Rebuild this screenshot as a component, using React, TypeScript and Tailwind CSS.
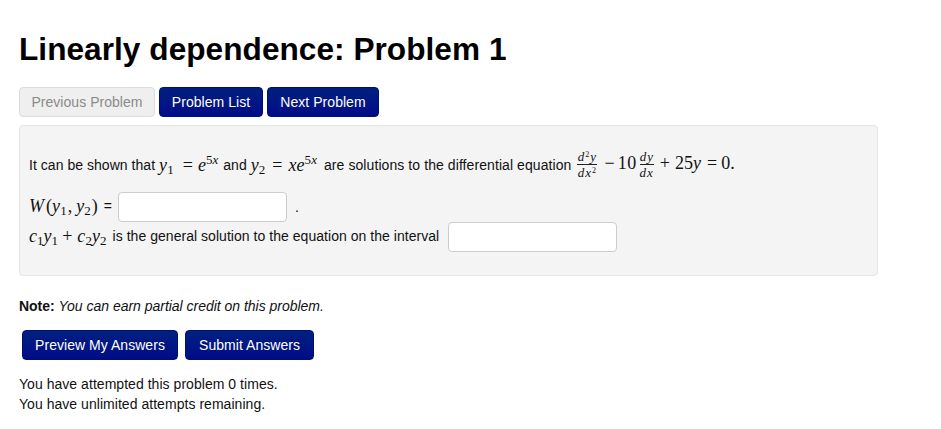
import type { ReactNode } from "react";

const btn =
  "h-[30px] flex items-center justify-center rounded-[4px] border border-[#00106e] bg-gradient-to-b from-[#001f80] to-[#000a88] text-[14px] text-white [text-shadow:0_-1px_0_rgba(0,0,0,0.25)]";

function M({ children, className = "" }: { children: ReactNode; className?: string }) {
  return (
    <span className={`flex items-baseline font-['Liberation_Serif',serif] text-[18px] text-[#111] whitespace-nowrap ${className}`}>
      {children}
    </span>
  );
}

function I({ children, className = "" }: { children: ReactNode; className?: string }) {
  return <i className={className}>{children}</i>;
}

function Sub({ children }: { children: ReactNode }) {
  return <span className="relative top-[3px] text-[13px] leading-none">{children}</span>;
}

function Sup({ children, tiny = false }: { children: ReactNode; tiny?: boolean }) {
  return tiny ? (
    <span className="relative top-[-4px] text-[8px] leading-none not-italic">{children}</span>
  ) : (
    <span className="relative top-[-7px] text-[13px] leading-none">{children}</span>
  );
}

function Frac({ top, bottom, width }: { top: ReactNode; bottom: ReactNode; width: string }) {
  return (
    <span className={`inline-flex flex-col items-center self-center italic text-[13px] leading-[14px] tracking-[1px] ${width}`}>
      <span className="border-b border-[#222] w-full text-center">{top}</span>
      <span className="pt-[1px]">{bottom}</span>
    </span>
  );
}

export default function App() {
  return (
    <div className="w-[941px] h-[429px] bg-white px-[19px] pt-[29px] font-['Liberation_Sans',Arial,sans-serif] text-[14px] tracking-[0.04px] text-[#111] overflow-hidden">
      <h1 className="text-[31.6px] leading-[40px] font-bold text-black">Linearly dependence: Problem 1</h1>

      <div className="flex gap-[4px] mt-[18px]">
        <div className="h-[30px] w-[136px] flex items-center justify-center rounded-[4px] border border-[#dcdcdc] bg-[#efefef] text-[#8a8a8a]">
          Previous Problem
        </div>
        <div className={`${btn} w-[104px]`}>Problem List</div>
        <div className={`${btn} w-[112px]`}>Next Problem</div>
      </div>

      <div className="w-[859px] h-[151px] mt-[8px] px-[9px] rounded-[4px] border border-[#e5e5e5] bg-[#f4f4f4]">
        <div className="flex items-center h-[30px] mt-[24px] whitespace-pre">
          <span>It can be shown that</span>
          <M className="ml-[4px]">
            <I>y</I><Sub>1</Sub>
            <span className="ml-[9px]">=</span>
            <I className="ml-[5px]">e</I><Sup>5<I>x</I></Sup>
          </M>
          <span className="ml-[5px]">and</span>
          <M className="ml-[4px]">
            <I>y</I><Sub>2</Sub>
            <span className="ml-[7px]">=</span>
            <I className="ml-[6px]">xe</I><Sup>5<I>x</I></Sup>
          </M>
          <span className="ml-[7px] tracking-[0.08px]">are solutions to the differential equation</span>
          <M className="ml-[6px]">
            <Frac width="w-[20px]" top={<>d<Sup tiny>2</Sup>y</>} bottom={<>dx<Sup tiny>2</Sup></>} />
            <span className="ml-[7px]">−</span>
            <span className="ml-[3px] tracking-[0.5px]">10</span>
            <Frac width="w-[14px] ml-[3px]" top="dy" bottom="dx" />
            <span className="ml-[6px]">+</span>
            <span className="ml-[5px]">25<I>y</I></span>
            <span className="ml-[6px]">=</span>
            <span className="ml-[4px]">0.</span>
          </M>
        </div>

        <div className="flex items-center h-[30px] mt-[12px]">
          <M className="mb-[2px]">
            <I>W</I>
            <span className="ml-[2px]">(</span>
            <I>y</I><Sub>1</Sub>
            <span className="ml-[1px]">,</span>
            <I className="ml-[4px]">y</I><Sub>2</Sub>
            <span className="ml-[1px]">)</span>
          </M>
          <span className="ml-[6px] mb-[2px]">=</span>
          <div className="ml-[6px] w-[169px] h-[30px] rounded-[4px] border border-[#cccccc] bg-white" />
          <span className="ml-[8px]">.</span>
        </div>

        <div className="flex items-center h-[30px]">
          <M className="mb-[2px]">
            <I>c</I><Sub>1</Sub><I>y</I><Sub>1</Sub>
            <span className="ml-[4px]">+</span>
            <I className="ml-[5px]">c</I><Sub>2</Sub><I>y</I><Sub>2</Sub>
          </M>
          <span className="ml-[6px] mb-[2px]">is the general solution to the equation on the interval</span>
          <div className="ml-[9px] w-[169px] h-[30px] rounded-[4px] border border-[#cccccc] bg-white" />
        </div>
      </div>

      <p className="mt-[20px] leading-[20px] tracking-[-0.02px]">
        <b>Note:</b> <i>You can earn partial credit on this problem.</i>
      </p>

      <div className="flex gap-[7px] mt-[14px] ml-[3px]">
        <div className={`${btn} w-[156px]`}>Preview My Answers</div>
        <div className={`${btn} w-[129px]`}>Submit Answers</div>
      </div>

      <div className="mt-[14px] leading-[20px]">
        <p>You have attempted this problem 0 times.</p>
        <p>You have unlimited attempts remaining.</p>
      </div>
    </div>
  );
}
